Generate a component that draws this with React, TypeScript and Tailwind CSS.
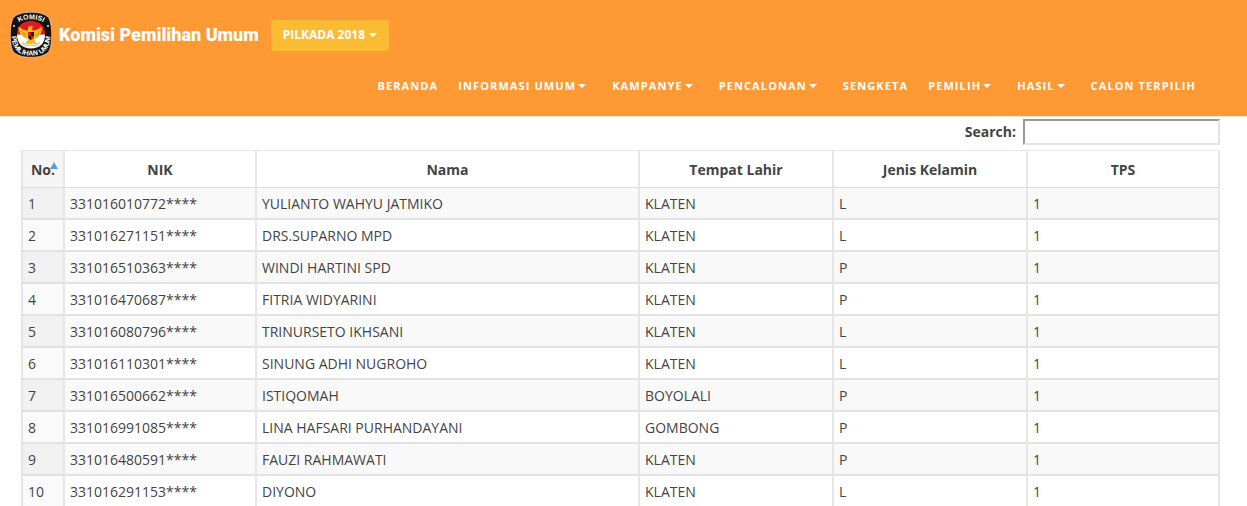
const menu = [
  { name: "BERANDA", href: "#beranda", dropdown: false },
  { name: "INFORMASI UMUM", href: "#informasi", dropdown: true },
  { name: "KAMPANYE", href: "#kampanye", dropdown: true },
  { name: "PENCALONAN", href: "#pencalonan", dropdown: true },
  { name: "SENGKETA", href: "#sengketa", dropdown: false },
  { name: "PEMILIH", href: "#pemilih", dropdown: true },
  { name: "HASIL", href: "#hasil", dropdown: true },
  { name: "CALON TERPILIH", href: "#calon", dropdown: false },
];

const columns = [
  { name: "No.", width: "w-[44px]" },
  { name: "NIK", width: "w-[192px]" },
  { name: "Nama", width: "w-[383px]" },
  { name: "Tempat Lahir", width: "w-[194px]" },
  { name: "Jenis Kelamin", width: "w-[194px]" },
  { name: "TPS", width: "w-[192px]" },
];

const voters = [
  ["1", "331016010772****", "YULIANTO WAHYU JATMIKO", "KLATEN", "L", "1"],
  ["2", "331016271151****", "DRS.SUPARNO MPD", "KLATEN", "L", "1"],
  ["3", "331016510363****", "WINDI HARTINI SPD", "KLATEN", "P", "1"],
  ["4", "331016470687****", "FITRIA WIDYARINI", "KLATEN", "P", "1"],
  ["5", "331016080796****", "TRINURSETO IKHSANI", "KLATEN", "L", "1"],
  ["6", "331016110301****", "SINUNG ADHI NUGROHO", "KLATEN", "L", "1"],
  ["7", "331016500662****", "ISTIQOMAH", "BOYOLALI", "P", "1"],
  ["8", "331016991085****", "LINA HAFSARI PURHANDAYANI", "GOMBONG", "P", "1"],
  ["9", "331016480591****", "FAUZI RAHMAWATI", "KLATEN", "P", "1"],
  ["10", "331016291153****", "DIYONO", "KLATEN", "L", "1"],
];

function Caret() {
  return (
    <svg viewBox="0 0 8 4" className="h-1 w-2 shrink-0 fill-current" aria-hidden="true">
      <path d="M0 0h8L4 4z" />
    </svg>
  );
}

function Logo() {
  return (
    <svg viewBox="0 0 42 46" className="h-[46px] w-[42px] shrink-0" role="img" aria-label="KPU">
      <defs>
        <path id="arc-top" d="M6 12.500C13 5.500 29 5.500 36 12.500" />
        <path id="arc-bottom" d="M1.500 21C1.500 36 7 43.500 21 43.500S40.500 36 40.500 21" />
      </defs>
      <path
        d="M21 .3C28 .3 34 1.500 38 5C40.500 8 41.700 15 41.700 23C41.700 31 40.500 37 38.500 40C34 44 28 45.300 21 45.300S8 44 3.500 40C1.500 37 .3 31 .3 23C.3 15 1.500 8 4 5C8 1.500 14 .3 21 .3Z"
        fill="#17120f"
        stroke="#f7e9d2"
        strokeWidth=".6"
      />
      <path d="M7 22.500C7 14 12.500 9 21 9s14 5 14 13.500z" fill="#e01a20" />
      <path d="M7 22.500h28C35 31.500 29.500 36.500 21 36.500S7 31.500 7 22.500z" fill="#fff" />
      {/* Garuda */}
      <path
        d="M8.500 14.500l5 3.200 4 1.100.8-3.300c.4-1.500 2.600-2.300 4-1l1.500.7-1.800.6.7 3 4.300-1.100 5-3.200c.2 5.500-2 10-6.200 12l-2 .6 2.700 4.500h-3l-1.200 2-1.300-1-1.300 1-1.200-2h-3l2.700-4.500-2-.6C11 24.500 8.300 20 8.500 14.500z"
        fill="#f0bc1c"
      />
      <path d="M11 19l4.500 3M12.500 22l3.500 2M31 19l-4.500 3M29.500 22L26 24" stroke="#b97b10" strokeWidth=".6" />
      <path d="M18 20h6v4.500c0 2-1.500 3-3 3.800-1.500-.8-3-1.800-3-3.800z" fill="#fff" />
      <path d="M18 20h3v4h-3zM21 24h3c0 2-1 3.300-3 4.300z" fill="#d51c20" />
      <path d="M21 20h3v4h-3zM18 24h3v4.300c-2-1-3-2.300-3-4.300z" fill="#241812" />
      <path d="M12.500 30c2 2.500 5 1.200 8.500 1.200s6.500 1.300 8.500-1.200l-1 3c-2.500 1.500-5 .8-7.500.8s-5 .7-7.500-.8z" fill="#f4e5b0" stroke="#b88b30" strokeWidth=".4" />
      <circle cx="4" cy="14" r=".9" fill="#fff" />
      <circle cx="38" cy="14" r=".9" fill="#fff" />
      <g className="fill-white font-['Liberation_Sans'] text-[7px] font-bold">
        <text textAnchor="middle">
          <textPath href="#arc-top" startOffset="50%">KOMISI</textPath>
        </text>
        <text textAnchor="middle">
          <textPath href="#arc-bottom" startOffset="50%">PEMILIHAN UMUM</textPath>
        </text>
      </g>
    </svg>
  );
}

function Header() {
  return (
    <header className="border-b border-[#f3e6d8] bg-[#ff9933] pb-[15px] text-white">
      <div className="flex h-[70px] items-center pl-[10px]">
        <a href="#home" className="flex items-center gap-[7px]">
          <Logo />
          <span className="font-[Impact,Roboto,sans-serif] text-[18px] font-black whitespace-nowrap">
            Komisi Pemilihan Umum
          </span>
        </a>
        <button
          type="button"
          className="ml-3 flex h-[31px] items-center gap-1 rounded-[3px] bg-[#fbbc34] px-3 text-[12px] font-bold whitespace-nowrap"
        >
          PILKADA 2018
          <Caret />
        </button>
      </div>
      <nav className="flex flex-wrap justify-end gap-x-5 pr-[51px]">
        {menu.map((item) => (
          <a
            key={item.name}
            href={item.href}
            className={`flex h-[31px] items-center gap-[2px] text-[11px] font-bold tracking-widest whitespace-nowrap ${
              item.dropdown ? "pr-[6px]" : ""
            }`}
          >
            {item.name}
            {item.dropdown && <Caret />}
          </a>
        ))}
      </nav>
    </header>
  );
}

export default function App() {
  return (
    <div className="bg-white font-['Open_Sans',sans-serif] text-[14px] leading-5 text-[#444]">
      <Header />
      <main className="pt-[2px] pr-[27px] pl-[21px]">
        <div className="mb-[5px] flex items-center justify-end gap-[7px]">
          <label htmlFor="search" className="font-bold">
            Search:
          </label>
          <input
            id="search"
            type="search"
            className="h-[26px] w-[197px] border-2 border-t-[#999] border-r-[#e3e3e3] border-b-[#e3e3e3] border-l-[#999] bg-white px-1 outline-none"
          />
        </div>
        <table className="w-full table-fixed border-separate border-spacing-0">
          <thead>
            <tr>
              {columns.map((col, i) => (
                <th
                  key={col.name}
                  className={`relative h-[38px] border-t border-r-2 border-b border-t-[#e8e8e8] border-r-[#e6e6e6] border-b-[#ddd] p-0 pt-[2px] font-bold ${col.width} ${
                    i === 0 ? "border-l-2 border-l-[#e6e6e6] bg-[#f5f5f5]" : ""
                  }`}
                >
                  {col.name}
                  {i === 0 && (
                    <svg viewBox="0 0 8 7" className="absolute top-[11px] right-[5px] h-[7px] w-2" aria-hidden="true">
                      <path d="M4 0l4 7H0z" fill="#5b9bd9" />
                    </svg>
                  )}
                </th>
              ))}
            </tr>
          </thead>
          <tbody>
            {voters.map((row) => (
              <tr key={row[0]} className="group odd:bg-[#f9f9f9]">
                {row.map((cell, i) => (
                  <td
                    key={i}
                    className={`border-r-2 border-b-2 border-r-[#e6e6e6] border-b-[#e2e2e2] px-[5px] pt-[6px] pb-1 ${
                      i === 0 ? "border-l-2 border-l-[#e6e6e6] bg-[#fafafa] group-odd:bg-[#f1f1f1]" : ""
                    }`}
                  >
                    {cell}
                  </td>
                ))}
              </tr>
            ))}
          </tbody>
        </table>
      </main>
    </div>
  );
}
